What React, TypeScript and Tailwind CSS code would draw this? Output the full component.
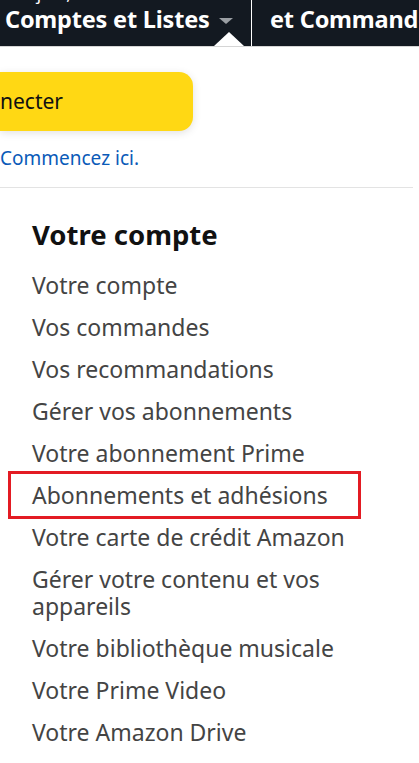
import { useState } from "react";

const items = [
  "Votre compte",
  "Vos commandes",
  "Vos recommandations",
  "Gérer vos abonnements",
  "Votre abonnement Prime",
  "Abonnements et adhésions",
  "Votre carte de crédit Amazon",
  "Gérer votre contenu et vos appareils",
  "Votre bibliothèque musicale",
  "Votre Prime Video",
  "Votre Amazon Drive",
];

const App = () => {
  const [active] = useState("Abonnements et adhésions");

  return (
    <div className="w-[419px] h-[763px] overflow-hidden bg-white font-['Noto_Sans',sans-serif]">
      {/* Top nav bar */}
      <div className="relative h-[47px] bg-[#131921] border-b border-[#d5d5d5] flex overflow-hidden">
        <div className="pl-[5px] w-[251px] shrink-0 flex flex-col">
          <span className="text-white text-[17px] leading-[17px] -mt-[15px] whitespace-nowrap">Bonjour, Identifiez-vous</span>
          <div className="flex items-center mt-[3px]">
            <span className="text-white font-bold text-[23.5px] leading-[28px] tracking-[-0.2px] whitespace-nowrap">Comptes et Listes</span>
            <span className="ml-[9px] mt-[4px] w-0 h-0 border-l-[7px] border-r-[7px] border-t-[6px] border-l-transparent border-r-transparent border-t-[#9a9ea3]" />
          </div>
        </div>
        <div className="w-px shrink-0 bg-white" />
        <div className="pl-[18px] pt-[5px] shrink-0">
          <span className="text-white font-bold text-[23.5px] leading-[28px] tracking-[-0.2px] whitespace-nowrap">et Commandes</span>
        </div>
        <span className="absolute left-[214px] bottom-0 w-0 h-0 border-l-[15px] border-r-[15px] border-b-[14px] border-l-transparent border-r-transparent border-b-white" />
      </div>

      {/* Sign-in area */}
      <div className="pt-[25px]">
        <div className="w-[193px] h-[59px] bg-[#ffd814] rounded-r-[14px] shadow-[0_2px_8px_rgba(0,0,0,0.12)] flex items-center">
          <span className="text-[21px] text-[#0f1111] leading-none">necter</span>
        </div>
        <p className="mt-[15px] text-[19px] leading-[24px] text-[#0a5ab8]">Commencez ici.</p>
        <div className="mt-[17px] w-[413px] h-px bg-[#e3e3e3]" />
      </div>

      {/* Account list */}
      <div className="pl-[32px] pt-[30px]">
        <h2 className="text-[27.5px] font-bold leading-[34px] text-[#111]">Votre compte</h2>
        <ul className="mt-[20px] flex flex-col gap-[15px]">
          {items.map((item) => (
            <li key={item} className="relative text-[23px] leading-[27px] text-[#444] w-[330px]">
              {item === active && (
                <span className="absolute -left-[24px] -top-[11px] w-[353px] h-[48px] border-[3px] border-[#e31b23]" />
              )}
              <span className="relative">{item}</span>
            </li>
          ))}
        </ul>
      </div>
    </div>
  );
};

export default App;
